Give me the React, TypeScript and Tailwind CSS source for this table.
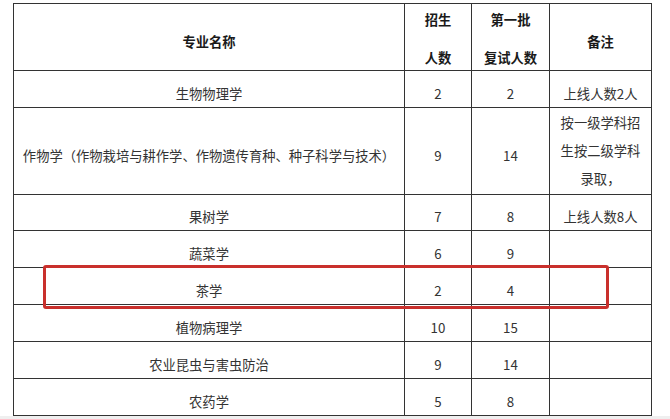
const rows = [
  { name: "生物物理学", plan: "2", retest: "2", note: ["上线人数2人"], h: "h-[37px]" },
  {
    name: "作物学（作物栽培与耕作学、作物遗传育种、种子科学与技术）",
    plan: "9",
    retest: "14",
    note: ["按一级学科招", "生按二级学科", "录取，"],
    h: "h-[87px]",
  },
  { name: "果树学", plan: "7", retest: "8", note: ["上线人数8人"], h: "h-[36px]" },
  { name: "蔬菜学", plan: "6", retest: "9", note: [], h: "h-[37px]" },
  { name: "茶学", plan: "2", retest: "4", note: [], h: "h-[37px]" },
  { name: "植物病理学", plan: "10", retest: "15", note: [], h: "h-[37px]" },
  { name: "农业昆虫与害虫防治", plan: "9", retest: "14", note: [], h: "h-[37px]" },
  { name: "农药学", plan: "5", retest: "8", note: [], h: "h-[37px]" },
];

const cell = "border border-[#333] text-center align-middle p-0 pt-[9px] leading-[20px]";

export default function App() {
  return (
    <div
      className="w-[670px] h-[419px] bg-[#efefef] overflow-hidden"
      style={{ fontFamily: '"Noto Sans CJK SC", "Noto Sans", sans-serif' }}
    >
      <div className="relative h-[416px] bg-white pt-[3px] pl-[13px]">
        <table className="border-collapse table-fixed w-[639px] text-[13.3px] text-[#333]">
          <colgroup>
            <col className="w-[391px]" />
            <col className="w-[67px]" />
            <col className="w-[78px]" />
            <col className="w-[102px]" />
          </colgroup>
          <thead>
            <tr className="h-[67px] font-bold text-[#1a1a1a]">
              <th className="border border-[#333] align-top p-0 pt-[28px] leading-[20px]">专业名称</th>
              <th className="border border-[#333] align-top p-0 pt-[6px] leading-[20px]">
                <div>招生</div>
                <div className="mt-[18px]">人数</div>
              </th>
              <th className="border border-[#333] align-top p-0 pt-[6px] leading-[20px]">
                <div>第一批</div>
                <div className="mt-[18px]">复试人数</div>
              </th>
              <th className="border border-[#333] align-top p-0 pt-[28px] leading-[20px]">备注</th>
            </tr>
          </thead>
          <tbody>
            {rows.map((r) => (
              <tr key={r.name} className={r.h}>
                <td className={`${cell} whitespace-nowrap`}>{r.name}</td>
                <td className={cell}>{r.plan}</td>
                <td className={cell}>{r.retest}</td>
                {r.note.length > 1 ? (
                  <td className="border border-[#333] text-center align-top p-0 pt-[1px] leading-[28px]">
                    {r.note.map((n) => (
                      <div key={n}>{n}</div>
                    ))}
                  </td>
                ) : (
                  <td className={cell}>{r.note[0]}</td>
                )}
              </tr>
            ))}
          </tbody>
        </table>
        <div className="absolute left-[43px] top-[265px] w-[566px] h-[44px] border-[3.5px] border-[#c9302c] rounded-[3px]" />
      </div>
    </div>
  );
}
